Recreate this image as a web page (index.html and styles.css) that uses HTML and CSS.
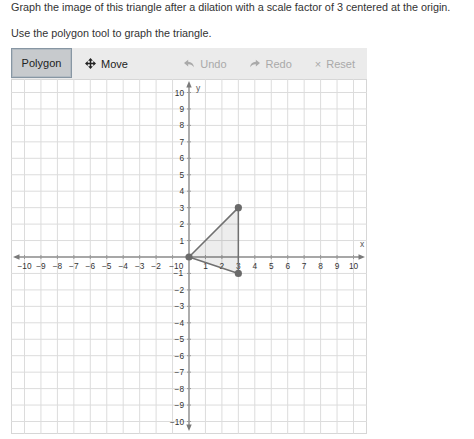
FILE: index.html
```html
<!DOCTYPE html>
<html lang="en">
<head>
<meta charset="utf-8">
<title>Dilation graph</title>
<link rel="stylesheet" href="styles.css">
</head>
<body>
<p class="prompt">Graph the image of this triangle after a dilation with a scale factor of 3 centered at the origin.</p>
<p class="prompt">Use the polygon tool to graph the triangle.</p>
<div class="tool-panel">
  <div class="toolbar">
    <div class="btn-active">Polygon</div>
    <div class="tool move">
      <svg class="icon-move" viewBox="0 0 12 12" width="11" height="11" aria-hidden="true">
        <path d="M6 2V10M2 6H10" stroke="#222" stroke-width="1.6"/>
        <polygon points="6,0 3.4,3 8.6,3" fill="#222"/>
        <polygon points="6,12 3.4,9 8.6,9" fill="#222"/>
        <polygon points="0,6 3,3.4 3,8.6" fill="#222"/>
        <polygon points="12,6 9,3.4 9,8.6" fill="#222"/>
      </svg>
      <span>Move</span>
    </div>
    <div class="history">
      <div class="tool">
        <svg viewBox="0 0 12 10" width="10" height="9" aria-hidden="true"><path d="M5 0.5 L0 4.5 L5 8.5 V6 C8 5.8 10 7 12 9.5 C11.5 5.5 9 3 5 3 Z" fill="#aaa"/></svg>
        <span>Undo</span>
      </div>
      <div class="tool">
        <svg viewBox="0 0 12 10" width="10" height="9" aria-hidden="true"><path d="M7 0.5 L12 4.5 L7 8.5 V6 C4 5.8 2 7 0 9.5 C0.5 5.5 3 3 7 3 Z" fill="#aaa"/></svg>
        <span>Redo</span>
      </div>
      <div class="tool reset">
        <span class="times">×</span>
        <span>Reset</span>
      </div>
    </div>
  </div>
  <svg class="graph" viewBox="0 0 356 355" width="356" height="355">
    <rect x="0.5" y="0.5" width="355" height="354" fill="#fff" stroke="#d6d6d6"/>
    <path class="grid" d="M13.5 0V355M29.95 0V355M46.4 0V355M62.85 0V355M79.3 0V355M95.75 0V355M112.2 0V355M128.65 0V355M145.1 0V355M161.55 0V355M194.45 0V355M210.9 0V355M227.35 0V355M243.8 0V355M260.25 0V355M276.7 0V355M293.15 0V355M309.6 0V355M326.05 0V355M342.5 0V355
      M0 13.5H356M0 29.95H356M0 46.4H356M0 62.85H356M0 79.3H356M0 95.75H356M0 112.2H356M0 128.65H356M0 145.1H356M0 161.55H356M0 194.45H356M0 210.9H356M0 227.35H356M0 243.8H356M0 260.25H356M0 276.7H356M0 293.15H356M0 309.6H356M0 326.05H356M0 342.5H356"/>
    <path class="axis" d="M6 178H350M178 6V350"/>
    <path class="ticks" d="M13.5 176V180M29.95 176V180M46.4 176V180M62.85 176V180M79.3 176V180M95.75 176V180M112.2 176V180M128.65 176V180M145.1 176V180M161.55 176V180M194.45 176V180M210.9 176V180M227.35 176V180M243.8 176V180M260.25 176V180M276.7 176V180M293.15 176V180M309.6 176V180M326.05 176V180M342.5 176V180
      M176 13.5H180M176 29.95H180M176 46.4H180M176 62.85H180M176 79.3H180M176 95.75H180M176 112.2H180M176 128.65H180M176 145.1H180M176 161.55H180M176 194.45H180M176 210.9H180M176 227.35H180M176 243.8H180M176 260.25H180M176 276.7H180M176 293.15H180M176 309.6H180M176 326.05H180M176 342.5H180"/>
    <polygon class="arrow" points="2,178 8.5,175.3 8.5,180.7"/>
    <polygon class="arrow" points="354,178 347.5,175.3 347.5,180.7"/>
    <polygon class="arrow" points="178,2 175.3,8.5 180.7,8.5"/>
    <polygon class="arrow" points="178,352 175.3,345.5 180.7,345.5"/>
    <text class="axis-name" x="351" y="167.5">x</text>
    <text class="axis-name" x="187" y="12">y</text>
    <g class="xlabels">
      <text x="13.5" y="189.5">−10</text>
      <text x="29.95" y="189.5">−9</text>
      <text x="46.4" y="189.5">−8</text>
      <text x="62.85" y="189.5">−7</text>
      <text x="79.3" y="189.5">−6</text>
      <text x="95.75" y="189.5">−5</text>
      <text x="112.2" y="189.5">−4</text>
      <text x="128.65" y="189.5">−3</text>
      <text x="145.1" y="189.5">−2</text>
      <text x="163" y="189.5">−1</text>
      <text x="170" y="189.5">0</text>
      <text x="194.45" y="189.5">1</text>
      <text x="210.9" y="189.5">2</text>
      <text x="227.35" y="189.5">3</text>
      <text x="243.8" y="189.5">4</text>
      <text x="260.25" y="189.5">5</text>
      <text x="276.7" y="189.5">6</text>
      <text x="293.15" y="189.5">7</text>
      <text x="309.6" y="189.5">8</text>
      <text x="326.05" y="189.5">9</text>
      <text x="342.5" y="189.5">10</text>
    </g>
    <g class="ylabels">
      <text x="173" y="16.5">10</text>
      <text x="173" y="32.95">9</text>
      <text x="173" y="49.4">8</text>
      <text x="173" y="65.85">7</text>
      <text x="173" y="82.3">6</text>
      <text x="173" y="98.75">5</text>
      <text x="173" y="115.2">4</text>
      <text x="173" y="131.65">3</text>
      <text x="173" y="148.1">2</text>
      <text x="173" y="164.55">1</text>
      <text x="172" y="197.45">−1</text>
      <text x="173" y="213.9">−2</text>
      <text x="173" y="230.35">−3</text>
      <text x="173" y="246.8">−4</text>
      <text x="173" y="263.25">−5</text>
      <text x="173" y="279.7">−6</text>
      <text x="173" y="296.15">−7</text>
      <text x="173" y="312.6">−8</text>
      <text x="173" y="329.05">−9</text>
      <text x="173" y="345.5">−10</text>
    </g>
    <polygon class="tri" points="178,178 227.35,128.65 227.35,194.45"/>
    <circle class="vertex" cx="178" cy="178" r="3.6"/>
    <circle class="vertex" cx="227.35" cy="128.65" r="3.6"/>
    <circle class="vertex" cx="227.35" cy="194.45" r="3.6"/>
  </svg>
</div>
</body>
</html>
```

FILE: styles.css
```css
body {
  margin: 0;
  padding: 0 11px;
  background: #fff;
  color: #333;
  font-family: "Liberation Sans", Arial, sans-serif;
}

.prompt {
  margin: 0;
  font-size: 10.8px;
  line-height: 14px;
}

.prompt + .prompt {
  margin-top: 12px;
}

.tool-panel {
  margin-top: 8px;
  width: 356px;
}

.toolbar {
  display: flex;
  align-items: center;
  height: 31px;
  background: #ebebeb;
  font-size: 11px;
  color: #333;
}

.btn-active {
  width: 61px;
  height: 30px;
  align-self: flex-start;
  box-sizing: border-box;
  display: flex;
  align-items: center;
  justify-content: center;
  background: #c7cacd;
  border: 1px solid #8796a3;
  box-shadow: inset 0 0 0 1px #b3bbc2;
  color: #222;
}

.tool {
  display: flex;
  align-items: center;
  gap: 6px;
}

.move {
  margin-left: 13px;
  gap: 5px;
  color: #222;
}

.icon-move {
  display: block;
}

.history {
  margin-left: auto;
  padding-right: 12px;
  display: flex;
  align-items: center;
  gap: 23px;
  color: #a9a9a9;
}

.reset {
  gap: 5px;
}

.times {
  font-size: 11px;
}

.graph {
  display: block;
}

.grid {
  fill: none;
  stroke: #dcdcdc;
  stroke-width: 1;
}

.axis {
  fill: none;
  stroke: #8a8a8a;
  stroke-width: 1.4;
}

.ticks {
  fill: none;
  stroke: #9a9a9a;
  stroke-width: 1;
}

.arrow {
  fill: #7a7a7a;
}

.graph text {
  font-family: "Liberation Sans", Arial, sans-serif;
  font-size: 8.3px;
  fill: #333;
}

.xlabels text {
  text-anchor: middle;
}

.ylabels text {
  text-anchor: end;
}

.graph .axis-name {
  font-size: 8.5px;
  fill: #555;
  text-anchor: middle;
}

.tri {
  fill: rgba(0, 0, 0, 0.07);
  stroke: #707070;
  stroke-width: 1.5;
  stroke-linejoin: round;
}

.vertex {
  fill: #6a6a6a;
}
```
